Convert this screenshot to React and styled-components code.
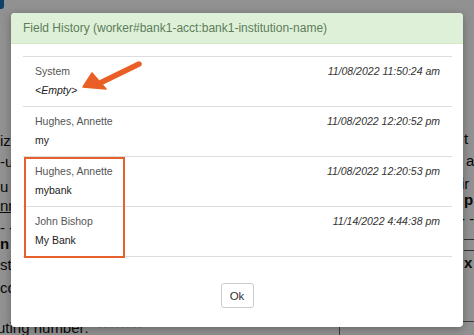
import React from 'react';
import styled, { createGlobalStyle } from 'styled-components';

const GlobalStyle = createGlobalStyle`
  html, body {
    margin: 0;
    padding: 0;
    background: #ffffff;
  }
  body {
    font-family: "Liberation Sans", Arial, sans-serif;
  }
`;

const history = [
  { who: 'System', value: '<Empty>', empty: true, when: '11/08/2022 11:50:24 am' },
  { who: 'Hughes, Annette', value: 'my', when: '11/08/2022 12:20:52 pm' },
  { who: 'Hughes, Annette', value: 'mybank', when: '11/08/2022 12:20:53 pm' },
  { who: 'John Bishop', value: 'My Bank', when: '11/14/2022 4:44:38 pm' },
];

// left / right scraps of the page that sits behind the dialog
const leftScraps = [
  { text: 'ize', top: 126 },
  { text: '-u', top: 9 },
  { text: 'u', top: 13 },
  { text: 'nn', top: 7, underline: true },
  { text: '- - -', top: 10 },
  { text: 'n', top: 4, bold: true },
  { text: 'sti', top: 9 },
  { text: 'co', top: 11 },
];

const rightScraps = [
  { text: 't', top: 124 },
  { text: 'a', top: 10, indent: 2 },
  { text: 'ir', top: 11, indent: -3 },
  { text: 'p', top: 4, bold: true },
  { text: '- - -', top: 7, indent: -4 },
];

const App = () => {
  return (
    <>
      <GlobalStyle />
      <Screen>
        <Page>
          <Corner />
          <PageColumns>
            <LeftColumn>
              {leftScraps.map((s, i) => (
                <Scrap key={i} $top={s.top} $bold={s.bold} $underline={s.underline}>
                  {s.text}
                </Scrap>
              ))}
            </LeftColumn>
            <RightColumn>
              {rightScraps.map((s, i) => (
                <Scrap key={i} $top={s.top} $bold={s.bold} $indent={s.indent}>
                  {s.text}
                </Scrap>
              ))}
              <RuleBox />
              <Scrap $top={6} $bold>x</Scrap>
            </RightColumn>
          </PageColumns>
          <BottomLine>
            <span>uting number:</span>
            <Masked>********</Masked>
            <BottomBox />
          </BottomLine>
        </Page>

        <Dim />

        <DialogLayer>
          <Dialog>
            <DialogHeader>
              <DialogTitle>Field History (worker#bank1-acct:bank1-institution-name)</DialogTitle>
            </DialogHeader>
            <DialogBody>
              <HistoryTable>
                {history.map((h, i) => (
                  <HistoryRow key={i}>
                    <Who>
                      <Name>{h.who}</Name>
                      <Value $empty={h.empty}>{h.value}</Value>
                    </Who>
                    <When>{h.when}</When>
                  </HistoryRow>
                ))}
              </HistoryTable>

              <Highlight />
              <Arrow width="60" height="32" viewBox="0 0 60 32">
                <path d="M57 4 L16 24" stroke="#ea5f26" strokeWidth="5.5" strokeLinecap="round" fill="none" />
                <path d="M1 27 L10 13 L24 29 Z" fill="#ea5f26" stroke="#ea5f26" strokeWidth="1.5" strokeLinejoin="round" />
              </Arrow>
            </DialogBody>
            <DialogFooter>
              <OkButton>Ok</OkButton>
            </DialogFooter>
          </Dialog>
        </DialogLayer>
      </Screen>
    </>
  );
};

const Screen = styled.div`
  position: relative;
  width: 474px;
  height: 335px;
  overflow: hidden;
  background: #ffffff;
`;

const Page = styled.div`
  width: 100%;
  height: 100%;
  display: flex;
  flex-direction: column;
  color: #111;
  font-size: 15px;
`;

const Corner = styled.div`
  width: 4px;
  height: 9px;
  background: #1b6fb8;
  border-bottom-right-radius: 3px;
`;

const PageColumns = styled.div`
  display: flex;
  justify-content: space-between;
  flex: 1;
`;

const LeftColumn = styled.div`
  display: flex;
  flex-direction: column;
  width: 40px;
`;

const RightColumn = styled.div`
  display: flex;
  flex-direction: column;
  width: 10px;
  padding-right: 0;
`;

const Scrap = styled.div`
  margin-top: ${(p) => p.$top}px;
  margin-left: ${(p) => p.$indent || 0}px;
  line-height: 12px;
  white-space: nowrap;
  font-weight: ${(p) => (p.$bold ? 700 : 400)};
  text-decoration: ${(p) => (p.$underline ? 'underline' : 'none')};
`;

const RuleBox = styled.div`
  margin-top: 14px;
  height: 10px;
  width: 20px;
  border-top: 1px solid #555;
  border-bottom: 1px solid #555;
`;

const BottomLine = styled.div`
  display: flex;
  align-items: center;
  gap: 9px;
  height: 14px;
  padding-bottom: 0;
  margin-left: -3px;
  font-size: 15px;
  line-height: 14px;
  white-space: nowrap;
`;

const Masked = styled.span`
  letter-spacing: 1px;
  font-size: 12px;
`;

const BottomBox = styled.div`
  margin-left: auto;
  width: 134px;
  height: 14px;
  border-left: 1px solid #666;
  border-top: 1px solid #666;
`;

const Dim = styled.div`
  position: absolute;
  inset: 0;
  background: rgba(0, 0, 0, 0.43);
`;

const DialogLayer = styled.div`
  position: absolute;
  inset: 0;
  padding: 13px 11px 8px 11px;
  display: flex;
  flex-direction: column;
`;

const Dialog = styled.div`
  flex: 1;
  display: flex;
  flex-direction: column;
  background: #ffffff;
  border-radius: 4px;
  overflow: hidden;
  box-shadow: 0 2px 8px rgba(0, 0, 0, 0.3);
`;

const DialogHeader = styled.div`
  height: 31px;
  background: #dff0d8;
  display: flex;
  align-items: center;
  padding: 0 12px;
  border-bottom: 1px solid #d6e9c6;
  box-sizing: border-box;
`;

const DialogTitle = styled.div`
  color: #5c7d5b;
  font-size: 12px;
  white-space: nowrap;
`;

const DialogBody = styled.div`
  position: relative;
  padding: 12px 11px 0 12px;
`;

const HistoryTable = styled.div`
  display: flex;
  flex-direction: column;
  border-bottom: 1px solid #dddddd;
`;

const HistoryRow = styled.div`
  height: 50px;
  box-sizing: border-box;
  border-top: 1px solid #dddddd;
  display: flex;
  justify-content: space-between;
  padding: 5px 12px 0 12px;
  font-size: 10.5px;
`;

const Who = styled.div`
  display: flex;
  flex-direction: column;
`;

const Name = styled.div`
  color: #555;
  line-height: 19px;
`;

const Value = styled.div`
  color: #222;
  line-height: 19px;
  font-style: ${(p) => (p.$empty ? 'italic' : 'normal')};
`;

const When = styled.div`
  color: #333;
  font-style: italic;
  line-height: 19px;
`;

const Highlight = styled.div`
  position: absolute;
  left: 13px;
  top: 113px;
  width: 101px;
  height: 101px;
  box-sizing: border-box;
  border: 2px solid #e5602c;
`;

const Arrow = styled.svg`
  position: absolute;
  left: 71px;
  top: 16px;
`;

const DialogFooter = styled.div`
  flex: 1;
  display: flex;
  justify-content: center;
  align-items: flex-start;
  padding-top: 26px;
`;

const OkButton = styled.button`
  width: 33px;
  height: 25px;
  padding: 0;
  background: #ffffff;
  border: 1px solid #cccccc;
  border-radius: 3px;
  color: #333;
  font-family: "Liberation Sans", Arial, sans-serif;
  font-size: 11.5px;
`;

export default App;
